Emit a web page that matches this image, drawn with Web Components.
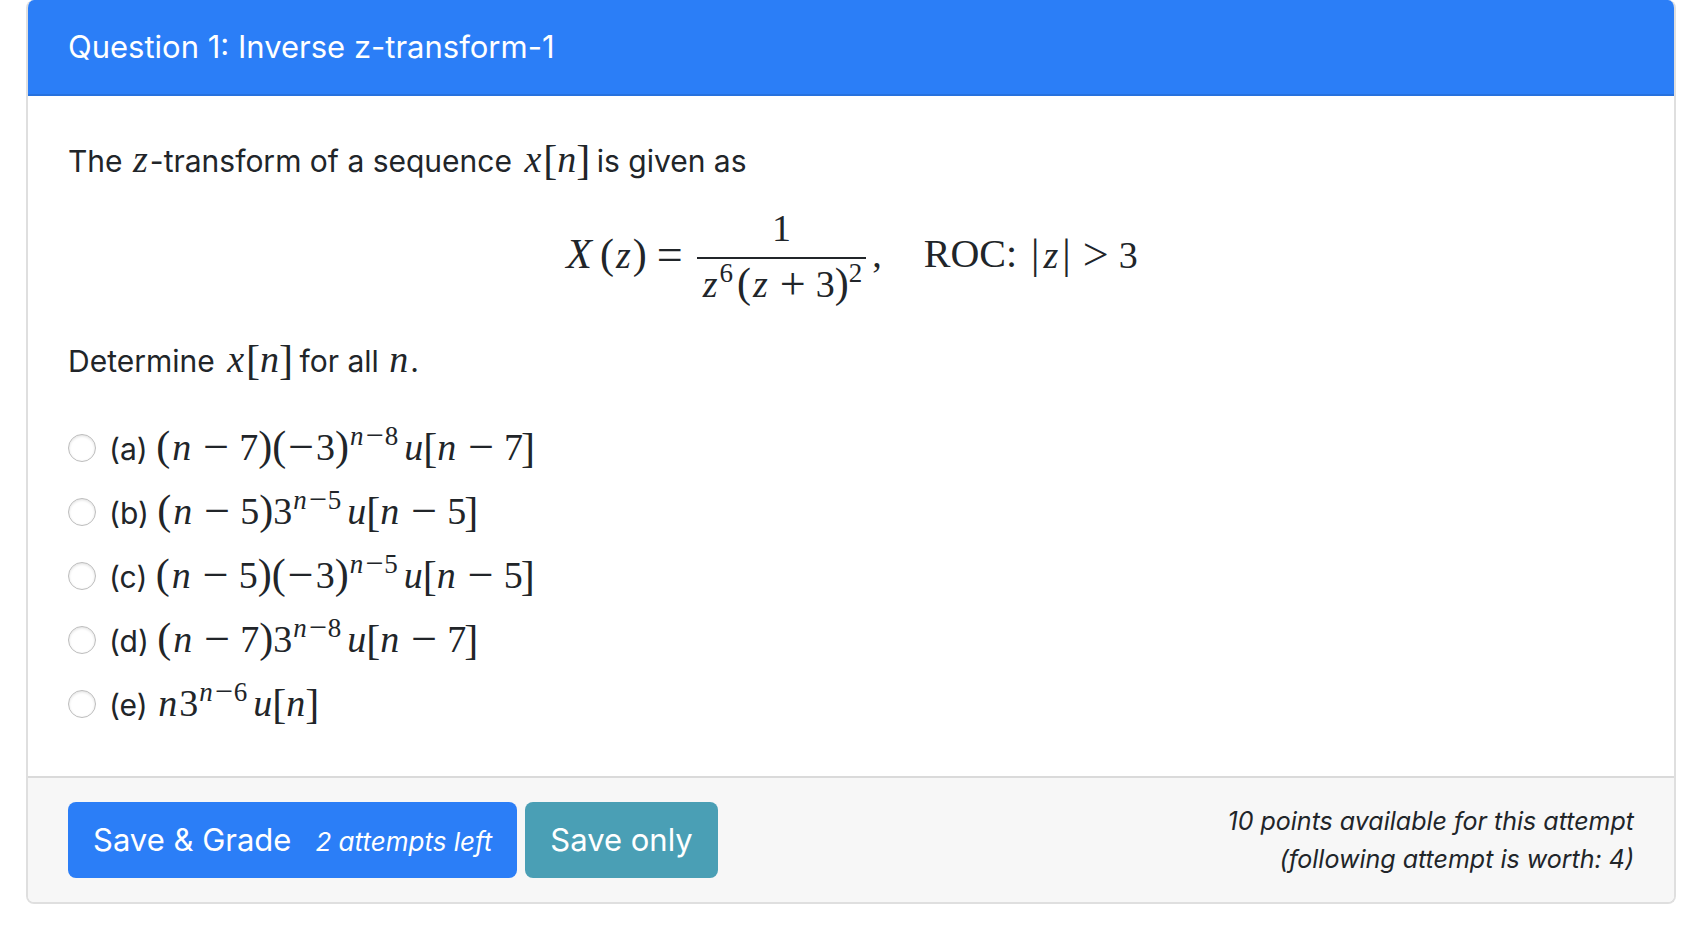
<!DOCTYPE html>
<html lang="en">
<head>
<meta charset="utf-8">
<meta name="viewport" content="width=device-width, initial-scale=1">
<title>Question 1: Inverse z-transform-1</title>
<style>
  body { margin: 0; background: #fff; color: #212529; font: 30px/48px Inter, "Liberation Sans", sans-serif; }
  p { margin: 0; }
</style>
</head>
<body>
<question-card>
  <span slot="title">Question 1: Inverse z-transform-1</span>
  <p>The <math-expr tex="z"></math-expr>-transform of a sequence <math-expr tex="x[n]"></math-expr> is given as</p>
  <display-formula></display-formula>
  <p>Determine <math-expr tex="x[n]"></math-expr> for all <math-expr tex="n"></math-expr>.</p>
  <choice-list></choice-list>
  <submit-bar slot="footer" attempts="2 attempts left">
    <span>10 points available for this attempt</span>
    <span>(following attempt is worth: 4)</span>
  </submit-bar>
</question-card>

<script>
/* Attaches an open shadow root filled with the given markup. */
const attach = (host, html) => {
  const t = document.createElement('template');
  t.innerHTML = html;
  const root = host.attachShadow({ mode: 'open' });
  root.append(t.content.cloneNode(true));
  return root;
};

/* Typesets a small subset of TeX: variables, digits, fences, operators and superscripts. */
function typeset(src) {
  return src.replace(/\^\{([^}]*)\}|\^(\d)| ([-+=>]) |([-])|([()])|([\[\]])|(\|)|([a-z])|([A-Z])/g,
    (m, group, single, spaced, minus, paren, fence, bar, lower, upper) => {
      if (group || single) return `<sup>${typeset(group || single)}</sup>`;
      if (spaced) {
        const sign = { '-': '−', '+': '+', '=': '=', '>': '&gt;' }[spaced];
        return `<span class="op">${sign}</span>`;
      }
      if (minus) return '<span class="sign">−</span>';
      if (paren) return `<span class="paren">${paren}</span>`;
      if (fence) return `<span class="fence">${fence}</span>`;
      if (bar) return '<span class="bar">|</span>';
      if (upper) return `<i class="cap">${upper}</i>`;
      return lower === 'x' ? '<i class="wide">x</i>' : `<i>${lower}</i>`;
    });
}

customElements.define('math-expr', class extends HTMLElement {
  connectedCallback() {
    if (this.shadowRoot) return;
    attach(this, `<style>
      :host { display: inline; font-family: "Liberation Serif", serif; font-size: 38px; line-height: 0; white-space: nowrap; }
      i { padding: 0 2px; }
      .wide { padding: 0 4px; }
      .cap { font-size: 42px; padding: 0 8px 0 2px; }
      .paren, .fence, .bar { font-size: 42px; }
      .fence { margin: 0 -2px; vertical-align: -2px; }
      .bar { padding: 0 2px; }
      .op, .sign { font-size: 46px; vertical-align: -2px; }
      .op { padding: 0 10px; }
      .sign { padding: 0 2px; }
      sup { font-size: 27px; line-height: 0; vertical-align: 15px; margin-right: 4px; }
      sup i { padding: 0 1px; }
      sup .sign { font-size: 32px; padding: 0 1px; vertical-align: -1px; }
    </style>${typeset(this.getAttribute('tex'))}`);
  }
});

customElements.define('display-formula', class extends HTMLElement {
  connectedCallback() {
    if (this.shadowRoot) return;
    attach(this, `<style>
      :host { display: flex; justify-content: center; align-items: center; font: 38px/48px "Liberation Serif", serif; }
      math-expr { line-height: 48px; }
      .frac { display: flex; flex-direction: column; align-items: stretch; text-align: center; margin: 0 6px 0 4px; }
      .num { line-height: 54px; padding-bottom: 2px; border-bottom: 2px solid #212529; }
      .den { padding: 0 0 0 4px; height: 48px; }
      .comma { padding-right: 42px; }
      .roc { font-size: 40px; padding-right: 12px; }
    </style>
    <math-expr tex="X(z) = "></math-expr>
    <span class="frac"><span class="num">1</span><span class="den"><math-expr tex="z^6(z + 3)^2"></math-expr></span></span>
    <span class="comma">,</span>
    <span class="roc">ROC:</span>
    <math-expr tex="|z| > 3"></math-expr>`);
  }
});

customElements.define('choice-list', class extends HTMLElement {
  connectedCallback() {
    if (this.shadowRoot) return;
    const choices = {
      a: '(n - 7)(-3)^{n-8}u[n - 7]',
      b: '(n - 5)3^{n-5}u[n - 5]',
      c: '(n - 5)(-3)^{n-5}u[n - 5]',
      d: '(n - 7)3^{n-8}u[n - 7]',
      e: 'n3^{n-6}u[n]'
    };
    const rows = Object.entries(choices).map(([key, tex]) => `
      <div class="row"><input type="radio" name="answer" id="${key}" value="${key}"><label for="${key}">(${key}) <math-expr tex="${tex}"></math-expr></label></div>`).join('');
    attach(this, `<style>
      :host { display: block; margin-top: 31px; }
      .row { display: flex; align-items: center; gap: 13px; height: 64px; }
      label { padding-top: 2px; }
      input { appearance: none; width: 28px; height: 28px; margin: 0; flex: none; border: 1px solid #bdbdbd; border-radius: 50%; background: #fff; box-shadow: inset 0 1px 3px #0002; }
      input:checked { border: 8px solid #2b7ef7; }
    </style>${rows}`);
  }
});

customElements.define('submit-bar', class extends HTMLElement {
  connectedCallback() {
    if (this.shadowRoot) return;
    attach(this, `<style>
      :host { display: flex; align-items: center; gap: 8px; }
      button { font: inherit; font-size: 31px; color: #fff; border: 0; border-radius: 8px; padding: 14px 25px; cursor: pointer; white-space: nowrap; }
      .grade { background: #2b7ef7; }
      .save { background: #4a9fb5; }
      small { font-size: 26px; line-height: 0; font-style: italic; margin-left: 24px; }
      .worth { display: flex; flex-direction: column; margin-left: auto; text-align: right; font-size: 25px; line-height: 38px; font-style: italic; }
    </style>
    <button class="grade" type="submit">Save &amp; Grade<small>${this.getAttribute('attempts')}</small></button>
    <button class="save" type="button">Save only</button>
    <div class="worth"><slot></slot></div>`);
  }
});

customElements.define('question-card', class extends HTMLElement {
  connectedCallback() {
    if (this.shadowRoot) return;
    attach(this, `<style>
      :host { display: block; margin: 0 30px 48px 26px; border: 2px solid #dfdfdf; border-top: 0; border-radius: 8px; overflow: hidden; }
      header { background: #2b7ef7; color: #fff; font-size: 31px; padding: 23px 40px; border-bottom: 2px solid #2771dd; }
      main { padding: 41px 40px 40px; display: flex; flex-direction: column; }
      footer { background: #f7f7f7; border-top: 2px solid #dadada; padding: 24px 40px; }
      ::slotted(display-formula) { margin: 16px 0 30px; }
    </style>
    <header><slot name="title"></slot></header>
    <main><slot></slot></main>
    <footer><slot name="footer"></slot></footer>`);
  }
});
</script>
</body>
</html>
